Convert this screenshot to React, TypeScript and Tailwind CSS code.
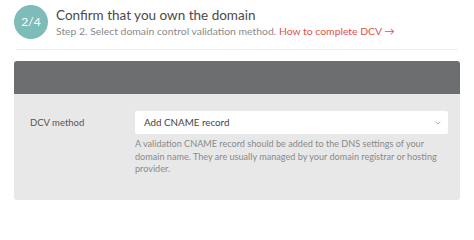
import { ChevronDown } from 'lucide-react';

export default function App() {
  return (
    <div className="w-[474px] h-[209px] bg-white overflow-hidden" style={{ fontFamily: 'Lato, sans-serif' }}>
      <div className="flex items-center gap-[8px] pl-[14px] pt-[5px]">
        <div className="w-[34px] h-[34px] rounded-full bg-[#7dbcb8] flex items-center justify-center text-white text-[12px]">
          2/4
        </div>
        <div className="flex flex-col">
          <div className="text-[13.5px] leading-[18px] text-[#4a4a4a]">Confirm that you own the domain</div>
          <div className="text-[10.4px] leading-[14px] text-[#8a8a8a]">
            Step 2. Select domain control validation method.{' '}
            <span className="text-[#e0514c]">How to complete DCV →</span>
          </div>
        </div>
      </div>
      <div className="mx-[16px] mt-[10px] border-t border-[#f0f0f0]" />
      <div className="mx-[14px] mt-[11px] rounded-[3px] overflow-hidden">
        <div className="h-[33px] bg-[#6d6e70]" />
        <div className="bg-[#e8e8e9] h-[106px] flex pt-[17px]">
          <div className="w-[121px] pl-[16px] pt-[5px] text-[9.5px] text-[#555]">DCV method</div>
          <div className="w-[313px] flex flex-col">
            <div className="h-[23px] bg-white rounded-[2px] flex items-center justify-between pl-[9px] pr-[6px] text-[9.8px] text-[#444]">
              <span>Add CNAME record</span>
              <ChevronDown size={8} className="text-[#888]" />
            </div>
            <div className="mt-[4px] text-[9.1px] leading-[12.5px] text-[#8a8a8a]">
              A validation CNAME record should be added to the DNS settings of your domain name. They are usually managed by your domain registrar or hosting provider.
            </div>
          </div>
        </div>
      </div>
    </div>
  );
}
